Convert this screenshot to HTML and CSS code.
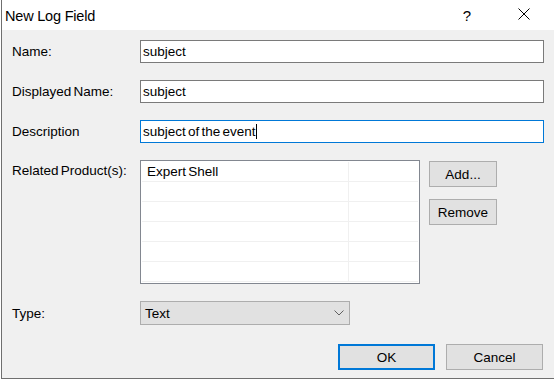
FILE: index.html
```html
<!DOCTYPE html>
<html lang="en">
<head>
    <meta charset="UTF-8">
    <title>New Log Field</title>
    <link rel="stylesheet" href="styles.css">
</head>
<body>
    <div class="dialog">
        <div class="titlebar">
            <span class="title">New Log Field</span>
            <span class="help">?</span>
            <svg class="close" width="12" height="12" viewBox="0 0 12 12">
                <path d="M0.5 0.5 L11.5 11.5 M11.5 0.5 L0.5 11.5" stroke="#000" stroke-width="1" fill="none"/>
            </svg>
        </div>
        <div class="content">
            <div class="row">
                <label class="label">Name:</label>
                <div class="textbox">subject</div>
            </div>
            <div class="row">
                <label class="label">Displayed Name:</label>
                <div class="textbox">subject</div>
            </div>
            <div class="row">
                <label class="label">Description</label>
                <div class="textbox focused">subject of the event<span class="caret"></span></div>
            </div>
            <div class="row list-row">
                <label class="label">Related Product(s):</label>
                <div class="listview">
                    <div class="list-item"><div class="col-name">Expert Shell</div><div class="col-rest"></div></div>
                    <div class="list-item"><div class="col-name"></div><div class="col-rest"></div></div>
                    <div class="list-item"><div class="col-name"></div><div class="col-rest"></div></div>
                    <div class="list-item"><div class="col-name"></div><div class="col-rest"></div></div>
                    <div class="list-item"><div class="col-name"></div><div class="col-rest"></div></div>
                    <div class="list-item"><div class="col-name"></div><div class="col-rest"></div></div>
                </div>
                <div class="side-buttons">
                    <button class="btn">Add...</button>
                    <button class="btn">Remove</button>
                </div>
            </div>
            <div class="row type-row">
                <label class="label">Type:</label>
                <div class="select">
                    <span>Text</span>
                    <svg width="10" height="6" viewBox="0 0 10 6">
                        <path d="M0.5 0.5 L5 5 L9.5 0.5" stroke="#606060" stroke-width="1" fill="none"/>
                    </svg>
                </div>
            </div>
            <div class="footer">
                <button class="btn btn-footer btn-default">OK</button>
                <button class="btn btn-footer">Cancel</button>
            </div>
        </div>
    </div>
</body>
</html>
```
FILE: styles.css
```css
body {
    margin: 0;
    background: #fff;
    font-family: "Liberation Sans", Arial, sans-serif;
    font-size: 13.5px;
    word-spacing: -1.5px;
    color: #000;
}
.dialog {
    margin-left: 1px;
    height: 378px;
    border-left: 1px solid #6f6f6f;
    border-bottom: 1px solid #6f6f6f;
    background: #f0f0f0;
}
.titlebar {
    height: 30px;
    background: #fff;
    display: flex;
    align-items: center;
}
.title {
    font-size: 14.5px;
    word-spacing: normal;
    letter-spacing: -0.2px;
    margin-left: 3px;
    margin-top: 1px;
}
.help {
    margin-left: auto;
    font-size: 15px;
    margin-top: 1px;
}
.close {
    margin-left: 47px;
    margin-right: 24px;
    margin-top: -3px;
}
.content {
    padding: 10px 10px 0 10px;
}
.row {
    display: flex;
    align-items: center;
    margin-bottom: 17px;
}
.label {
    width: 128px;
    flex: none;
}
.textbox {
    flex: 1;
    height: 23px;
    box-sizing: border-box;
    border: 1px solid #7a7a7a;
    background: #fff;
    padding: 0 2px;
    line-height: 21px;
    white-space: nowrap;
}
.textbox.focused {
    border-color: #0078d7;
}
.caret {
    display: inline-block;
    width: 1px;
    height: 15px;
    background: #000;
    vertical-align: -3px;
}
.list-row {
    align-items: flex-start;
}
.list-row .label {
    padding-top: 3px;
}
.listview {
    width: 280px;
    height: 124px;
    box-sizing: border-box;
    border: 1px solid #828790;
    background: #fff;
    padding: 1px;
}
.list-item {
    display: flex;
    height: 20px;
    box-sizing: border-box;
    border-bottom: 1px solid #f0f0f0;
}
.col-name {
    width: 207px;
    box-sizing: border-box;
    border-right: 1px solid #f0f0f0;
    padding-left: 5px;
    line-height: 19px;
}
.col-rest {
    flex: 1;
}
.btn {
    box-sizing: border-box;
    background: #e1e1e1;
    border: 1px solid #adadad;
    font: inherit;
    word-spacing: inherit;
    color: #000;
    padding: 0;
}
.side-buttons {
    display: flex;
    flex-direction: column;
    gap: 12px;
    margin-left: 9px;
    margin-top: 1px;
}
.side-buttons .btn {
    width: 68px;
    height: 26px;
}
.type-row {
    margin-bottom: 19px;
}
.select {
    width: 210px;
    height: 24px;
    box-sizing: border-box;
    border: 1px solid #adadad;
    background: #e1e1e1;
    display: flex;
    align-items: center;
    justify-content: space-between;
    padding: 0 5px 0 4px;
}
.footer {
    display: flex;
    justify-content: flex-end;
    gap: 11px;
    padding-right: 1px;
}
.btn-footer {
    width: 97px;
    height: 26px;
}
.btn-default {
    border: 2px solid #0078d7;
}
```
